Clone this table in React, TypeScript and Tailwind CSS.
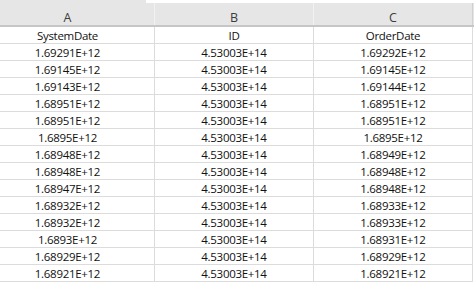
const rows: [string, string, string][] = [
  ["SystemDate", "ID", "OrderDate"],
  ["1.69291E+12", "4.53003E+14", "1.69292E+12"],
  ["1.69145E+12", "4.53003E+14", "1.69145E+12"],
  ["1.69143E+12", "4.53003E+14", "1.69144E+12"],
  ["1.68951E+12", "4.53003E+14", "1.68951E+12"],
  ["1.68951E+12", "4.53003E+14", "1.68951E+12"],
  ["1.6895E+12", "4.53003E+14", "1.6895E+12"],
  ["1.68948E+12", "4.53003E+14", "1.68949E+12"],
  ["1.68948E+12", "4.53003E+14", "1.68948E+12"],
  ["1.68947E+12", "4.53003E+14", "1.68948E+12"],
  ["1.68932E+12", "4.53003E+14", "1.68933E+12"],
  ["1.68932E+12", "4.53003E+14", "1.68933E+12"],
  ["1.6893E+12", "4.53003E+14", "1.68931E+12"],
  ["1.68929E+12", "4.53003E+14", "1.68929E+12"],
  ["1.68921E+12", "4.53003E+14", "1.68921E+12"],
];

const cols = "grid grid-cols-[174px_159px_159px]";

export default function App() {
  return (
    <div
      className="w-[474px] h-[286px] overflow-hidden bg-white text-[#111]"
      style={{ fontFamily: '"Open Sans", "Liberation Sans", Arial, sans-serif' }}
    >
      {/* column header strip */}
      <div className="relative bg-[#e6e6e6] border-b-2 border-[#c6c6c6]">
        <div className="absolute left-[146px] right-0 top-0 h-[3px] bg-white" />
        <div className={`${cols} ml-[-19px] h-[25px] text-[12.5px] leading-none text-[#3c3c3c]`}>
          <div className="flex justify-center pt-[12px] border-r border-[#f2f2f2]">A</div>
          <div className="flex justify-center pt-[12px] border-r border-[#f2f2f2]">B</div>
          <div className="flex justify-center pt-[12px] border-r border-[#d0d0d0]">C</div>
        </div>
      </div>

      {/* sheet body */}
      <div className="ml-[-19px]">
        {rows.map((r, i) => (
          <div key={i} className={`${cols} h-[17px] text-[11.5px] leading-none tracking-[-0.3px]`}>
            {r.map((c, j) => (
              <div
                key={j}
                className="flex items-center justify-center pt-[1px] border-b border-r border-[#dcdcdc]"
              >
                {c}
              </div>
            ))}
          </div>
        ))}
      </div>
    </div>
  );
}
